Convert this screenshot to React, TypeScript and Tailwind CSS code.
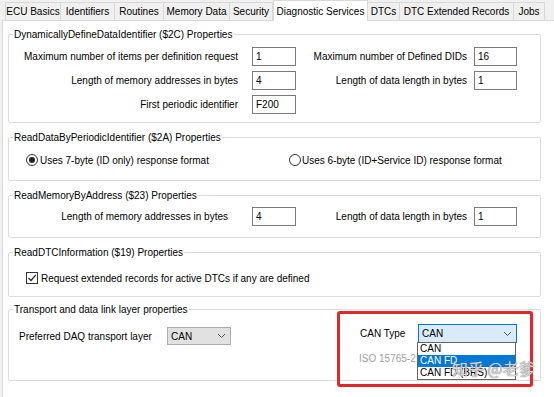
import React from "react";

const font = { fontFamily: '"Liberation Sans", Arial, sans-serif' };

const tabs: { label: string; w: string; active?: boolean }[] = [
  { label: "ECU Basics", w: "w-[56px]" },
  { label: "Identifiers", w: "w-[55px]" },
  { label: "Routines", w: "w-[50px]" },
  { label: "Memory Data", w: "w-[67px]" },
  { label: "Security", w: "w-[44px]" },
  { label: "Diagnostic Services", w: "w-[95px]", active: true },
  { label: "DTCs", w: "w-[33px]" },
  { label: "DTC Extended Records", w: "w-[115px]" },
  { label: "Jobs", w: "w-[32px]" },
];

function Input({ value, w = "w-[44px]" }: { value: string; w?: string }) {
  return (
    <div className={`${w} h-[19px] border border-[#7a7a7a] bg-white flex items-center pl-[3px] text-[10px] text-black`}>
      {value}
    </div>
  );
}

function Group({ title, children, cls = "" }: { title: string; children: React.ReactNode; cls?: string }) {
  return (
    <fieldset className={`border border-[#dcdcdc] rounded-[2px] px-0 ${cls}`}>
      <legend className="ml-[4px] px-[1px] text-[10px] leading-[13px] text-black">{title}</legend>
      {children}
    </fieldset>
  );
}

function Row({ l1, v1, l2, v2 }: { l1: string; v1: string; l2?: string; v2?: string }) {
  return (
    <div className="flex items-center h-[19px]">
      <div className="w-[229px] text-right text-[10px]">{l1}</div>
      <div className="w-[14px]" />
      <Input value={v1} />
      {l2 !== undefined && (
        <>
          <div className="w-[171px] text-right text-[10px]">{l2}</div>
          <div className="w-[7px]" />
          <Input value={v2 ?? ""} w="w-[43px]" />
        </>
      )}
    </div>
  );
}

function Chevron({ color = "#555" }: { color?: string }) {
  return (
    <svg width="9" height="6" viewBox="0 0 9 6">
      <path d="M1 1 L4.5 4.5 L8 1" fill="none" stroke={color} strokeWidth="1" />
    </svg>
  );
}

export default function App() {
  return (
    <div className="w-[554px] h-[397px] bg-[#f0f0f0] overflow-hidden relative text-black" style={font}>
      {/* tab bar */}
      <div className="flex items-end h-[20px] pl-[5px]">
        {tabs.map((t) =>
          t.active ? (
            <div
              key={t.label}
              className={`${t.w} h-[21px] -mb-[1px] bg-white border border-b-0 border-[#d9d9d9] flex items-start pt-[3px] justify-center text-[10px] relative z-10`}
            >
              {t.label}
            </div>
          ) : (
            <div
              key={t.label}
              className={`${t.w} h-[18px] bg-[#f0f0f0] border border-b-0 border-[#d9d9d9] -ml-[1px] first:ml-0 flex items-center justify-center text-[10px]`}
            >
              {t.label}
            </div>
          )
        )}
      </div>
      {/* pane */}
      <div className="ml-[2px] h-[377px] bg-white border-l border-t border-[#d9d9d9] pl-[5px] pr-[13px] pt-[7px] flex flex-col gap-[8px]">
        <Group title="DynamicallyDefineDataIdentifier ($2C) Properties" cls="pt-[6px] pb-[8px]">
          <div className="flex flex-col gap-[5px]">
            <Row l1="Maximum number of items per definition request" v1="1" l2="Maximum number of Defined DIDs" v2="16" />
            <Row l1="Length of memory addresses in bytes" v1="4" l2="Length of data length in bytes" v2="1" />
            <Row l1="First periodic identifier" v1="F200" />
          </div>
        </Group>

        <Group title="ReadDataByPeriodicIdentifier ($2A) Properties" cls="pt-[9px] pb-[13px]">
          <div className="flex items-center h-[14px] text-[10px]">
            <div className="ml-[17px] w-[12px] h-[12px] rounded-full border border-[#333] flex items-center justify-center">
              <div className="w-[6px] h-[6px] rounded-full bg-[#222]" />
            </div>
            <span className="ml-[2px]">Uses 7-byte (ID only) response format</span>
            <div className="ml-[80px] w-[12px] h-[12px] rounded-full border border-[#333]" />
            <span className="ml-[1px]">Uses 6-byte (ID+Service ID) response format</span>
          </div>
        </Group>

        <Group title="ReadMemoryByAddress ($23) Properties" cls="pt-[5px] pb-[11px]">
          <div className="flex items-center h-[19px]">
            <div className="w-[219px] text-right text-[10px]">Length of memory addresses in bytes</div>
            <div className="w-[24px]" />
            <Input value="4" />
            <div className="w-[171px] text-right text-[10px]">Length of data length in bytes</div>
            <div className="w-[7px]" />
            <Input value="1" w="w-[43px]" />
          </div>
        </Group>

        <Group title="ReadDTCInformation ($19) Properties" cls="pt-[12px] pb-[11px]">
          <div className="flex items-center h-[14px] text-[10px]">
            <div className="ml-[17px] w-[12px] h-[12px] border border-[#333] flex items-center justify-center">
              <svg width="10" height="10" viewBox="0 0 10 10">
                <path d="M1.5 5 L4 7.5 L8.8 1.8" fill="none" stroke="#222" strokeWidth="1.2" />
              </svg>
            </div>
            <span className="ml-[3px]">Request extended records for active DTCs if any are defined</span>
          </div>
        </Group>

        <Group title="Transport and data link layer properties" cls="pt-[11px] pb-[16px] -mt-[2px]">
          <div className="flex items-center h-[18px] text-[10px]">
            <span className="ml-[10px] w-[148px]">Preferred DAQ transport layer</span>
            <div className="w-[64px] h-[18px] bg-[#e1e1e1] border border-[#adadad] flex items-center justify-between pl-[3px] pr-[4px]">
              <span>CAN</span>
              <Chevron />
            </div>
            <div className="ml-[129px] flex items-center -mt-[5px]">
              <span className="w-[58px]">CAN Type</span>
              <div className="w-[99px] h-[19px] bg-[#d9eaf8] border border-[#0078d7] flex items-center justify-between pl-[3px] pr-[4px]">
                <span>CAN</span>
                <Chevron />
              </div>
            </div>
          </div>
          <div className="flex mt-[7px] h-[12px] items-center text-[10px] text-[#a0a0a0] ml-[350px]">ISO 15765-2:</div>
        </Group>
      </div>

      {/* open dropdown list */}
      <div className="absolute left-[417px] top-[342px] w-[99px] border border-[#646464] bg-white text-[10px] z-20 flex flex-col">
        <div className="h-[12px] leading-[12px] pl-[2px]">CAN</div>
        <div className="h-[12px] leading-[12px] pl-[2px] bg-[#0078d7] text-white">CAN FD</div>
        <div className="h-[12px] leading-[12px] pl-[2px]">CAN FD (BRS)</div>
      </div>

      {/* red annotation box */}
      <div className="absolute left-[337px] top-[311px] w-[196px] h-[76px] border-[3px] border-[#e3262a] rounded-[3px] z-30 pointer-events-none" />

      {/* watermark */}
      <div
        className="absolute left-[452px] top-[359px] z-40 text-[16px] leading-[18px] text-white/70 pointer-events-none"
        style={{ fontFamily: '"Noto Sans CJK SC", sans-serif', textShadow: "0 0 1px #777, 0 0 1px #777" }}
      >
        知乎 @老爹
      </div>
    </div>
  );
}
